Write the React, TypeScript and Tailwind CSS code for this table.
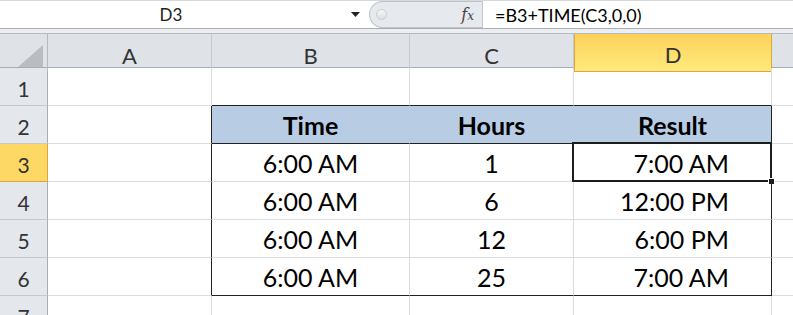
const rows = [
  { n: 1 },
  { n: 2, head: true, b: "Time", c: "Hours", d: "Result" },
  { n: 3, b: "6:00 AM", c: "1", d: "7:00 AM" },
  { n: 4, b: "6:00 AM", c: "6", d: "12:00 PM" },
  { n: 5, b: "6:00 AM", c: "12", d: "6:00 PM" },
  { n: 6, b: "6:00 AM", c: "25", d: "7:00 AM" },
  { n: 7 },
];

const inTable = (n: number) => n >= 2 && n <= 6;

function FormulaBar() {
  return (
    <div className="flex h-[29px] border-t border-b border-t-[#d5d9de] border-b-[#a9aeb4] bg-white">
      {/* name box */}
      <div className="flex w-[342px] items-center justify-center pt-[1px] text-[17px] text-[#222]">
        D3
      </div>
      <div className="flex w-[27px] items-center justify-center">
        <svg width="9" height="5" viewBox="0 0 9 5">
          <polygon points="0,0 9,0 4.5,5" fill="#222" />
        </svg>
      </div>
      {/* expand pill + fx */}
      <div className="flex w-[113px] items-center rounded-l-full border-y border-l border-[#bfc4ca] bg-[#e6e9ed]">
        <div className="ml-[6px] h-[11px] w-[11px] rounded-full border border-[#c9cdd2] bg-gradient-to-b from-[#f6f7f8] to-[#dcdfe3]" />
        <div className="ml-auto mr-[8px] font-['DejaVu_Serif',serif] text-[16px] italic text-[#444]">
          f<span className="text-[12px]">x</span>
        </div>
      </div>
      <div className="flex flex-1 items-center border-l border-[#c3c8ce] pl-[12px] pt-[2px] text-[18px] text-black">
        =B3+TIME(C3,0,0)
      </div>
    </div>
  );
}

function ColumnHeaders() {
  return (
    <div className="grid h-[35px] grid-cols-[48px_164px_198px_164px_198px_1fr] border-y border-t-[#b5bac0] border-b-[#a8adb3] bg-[#dfe3e8] text-[22px] text-[#333]">
      <div className="relative border-r border-[#b5bac0]">
        <svg className="absolute bottom-[5px] right-[4px]" width="25" height="22" viewBox="0 0 25 22">
          <polygon points="25,0 25,22 0,22" fill="#b9bdc2" />
        </svg>
      </div>
      <div className="flex items-center justify-center border-r border-[#c5cad0] pt-[4px]">A</div>
      <div className="flex items-center justify-center border-r border-[#c5cad0] pt-[4px]">B</div>
      <div className="flex items-center justify-center border-r border-[#c5cad0] pt-[4px]">C</div>
      <div className="flex items-center justify-center border-x border-b border-[#e0a640] bg-gradient-to-b from-[#fdd15a] to-[#feea7c] pt-[4px]">
        D
      </div>
      <div />
    </div>
  );
}

export default function App() {
  return (
    <div className="h-[315px] w-[793px] overflow-hidden bg-white font-['Lato',sans-serif]">
      <FormulaBar />
      <div className="h-[4px] bg-[#eceef1]" />
      <ColumnHeaders />
      <div className="grid grid-cols-[48px_164px_198px_164px_198px_1fr] auto-rows-[38px] text-[25px] text-black">
        {rows.map((r) => {
          const sel = r.n === 3;
          return [
            <div
              key={`h${r.n}`}
              className={
                sel
                  ? "flex items-center justify-center border-r border-b border-[#e0a640] bg-[#fdd864] pt-[4px] text-[21px] text-[#333]"
                  : "flex items-center justify-center border-r border-b border-r-[#a8adb3] border-b-[#c5cad0] bg-[#e4e7eb] pt-[4px] text-[21px] text-[#333]"
              }
            >
              {r.n}
            </div>,
            <div
              key={`a${r.n}`}
              className={
                inTable(r.n)
                  ? "border-r border-b border-r-[#222] border-b-[#dadcdd]"
                  : "border-r border-b border-[#dadcdd]"
              }
            />,
            <div
              key={`b${r.n}`}
              className={
                r.head
                  ? "flex items-center justify-center border-r border-b border-r-[#b8cce4] border-b-[#222] bg-[#b8cce4] pt-[2px] font-bold"
                  : r.n === 1 || r.n === 6
                    ? "flex items-center justify-center border-r border-b border-r-[#dadcdd] border-b-[#222] pt-[3px]"
                    : "flex items-center justify-center border-r border-b border-[#dadcdd] pt-[3px]"
              }
            >
              {r.b}
            </div>,
            <div
              key={`c${r.n}`}
              className={
                r.head
                  ? "flex items-center justify-center border-r border-b border-r-[#b8cce4] border-b-[#222] bg-[#b8cce4] pt-[2px] font-bold"
                  : r.n === 1 || r.n === 6
                    ? "flex items-center justify-center border-r border-b border-r-[#dadcdd] border-b-[#222] pt-[3px]"
                    : "flex items-center justify-center border-r border-b border-[#dadcdd] pt-[3px]"
              }
            >
              {r.c}
            </div>,
            <div
              key={`d${r.n}`}
              className={
                r.head
                  ? "flex items-center justify-center border-r border-b border-[#222] bg-[#b8cce4] pt-[2px] font-bold"
                  : r.n === 6
                    ? "flex items-center justify-end border-r border-b border-[#222] pr-[42px] pt-[3px]"
                    : inTable(r.n)
                      ? "relative flex items-center justify-end border-r border-b border-r-[#222] border-b-[#dadcdd] pr-[42px] pt-[3px]"
                      : r.n === 1
                        ? "border-r border-b border-r-[#dadcdd] border-b-[#222]"
                        : "border-r border-b border-[#dadcdd]"
              }
            >
              {r.d}
              {sel && (
                <>
                  <div className="absolute -bottom-[1px] -left-[2px] -right-[1px] -top-[2px] border-2 border-[#1c1c1c]" />
                  <div className="absolute -bottom-[4px] -right-[4px] h-[7px] w-[7px] border border-white bg-[#1c1c1c]" />
                </>
              )}
            </div>,
            <div key={`e${r.n}`} className="border-b border-[#dadcdd]" />,
          ];
        })}
      </div>
    </div>
  );
}
